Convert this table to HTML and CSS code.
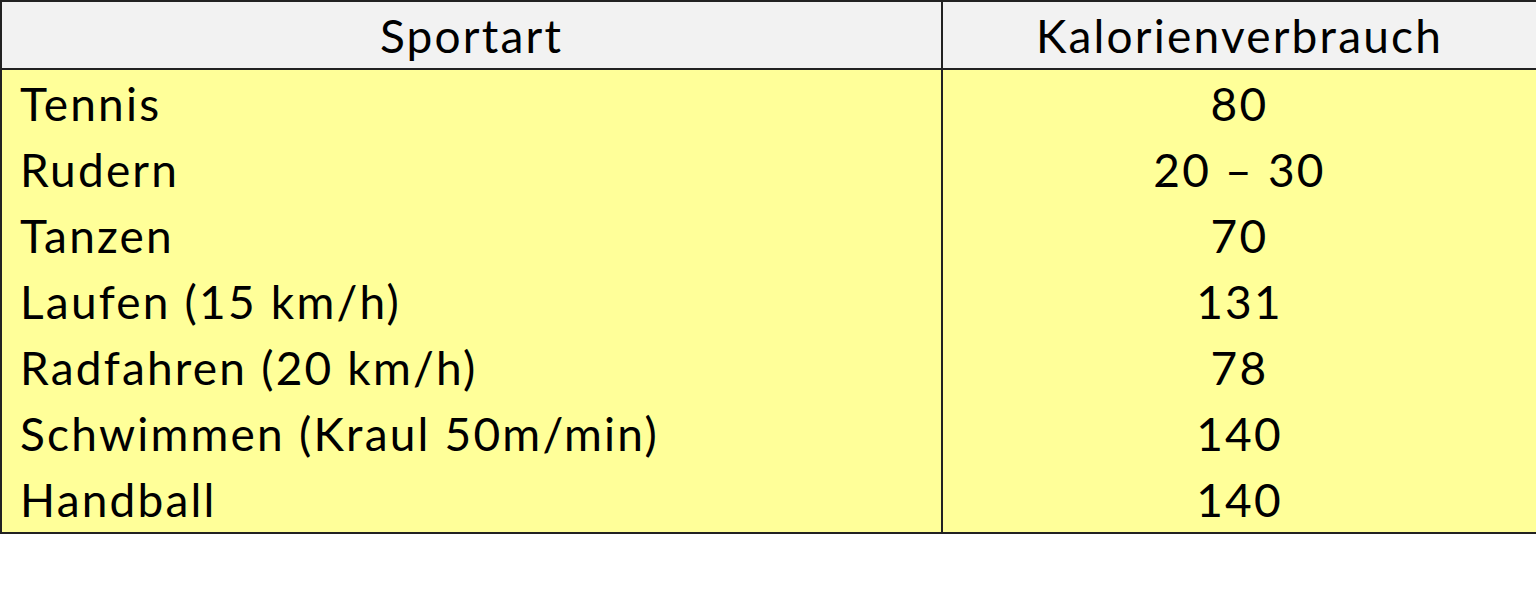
FILE: index.html
```html
<!DOCTYPE html>
<html lang="de">
<head>
<meta charset="utf-8">
<title>Kalorienverbrauch</title>
<link rel="stylesheet" href="styles.css">
</head>
<body>
<table class="sport-table">
  <thead>
    <tr><th class="col-sport">Sportart</th><th class="col-kcal">Kalorienverbrauch</th></tr>
  </thead>
  <tbody>
    <tr><td class="name">Tennis</td><td class="val">80</td></tr>
    <tr><td class="name">Rudern</td><td class="val">20 – 30</td></tr>
    <tr><td class="name">Tanzen</td><td class="val">70</td></tr>
    <tr><td class="name">Laufen (15 km/h)</td><td class="val">131</td></tr>
    <tr><td class="name">Radfahren (20 km/h)</td><td class="val">78</td></tr>
    <tr><td class="name">Schwimmen (Kraul 50m/min)</td><td class="val">140</td></tr>
    <tr><td class="name">Handball</td><td class="val">140</td></tr>
  </tbody>
</table>
</body>
</html>
```
FILE: styles.css
```css
html, body {
  margin: 0;
  padding: 0;
  background: #ffffff;
}
.sport-table {
  border-collapse: collapse;
  width: 1538px;
  table-layout: fixed;
  font-family: Lato, "Open Sans", sans-serif;
  font-size: 46px;
  letter-spacing: 2.2px;
  color: #000;
}
.sport-table th,
.sport-table td {
  border: 2px solid #222;
  padding: 0;
}
.sport-table thead th {
  background: #f2f2f2;
  font-weight: normal;
  height: 66px;
  text-align: center;
}
.col-sport { width: 939px; }
.sport-table tbody td {
  background: #ffff99;
  height: 66px;
  border-top: none;
  border-bottom: none;
}
.sport-table tbody tr:last-child td { border-bottom: 2px solid #222; }
.name { text-align: left; padding-left: 18px !important; }
.val { text-align: center; }
```
